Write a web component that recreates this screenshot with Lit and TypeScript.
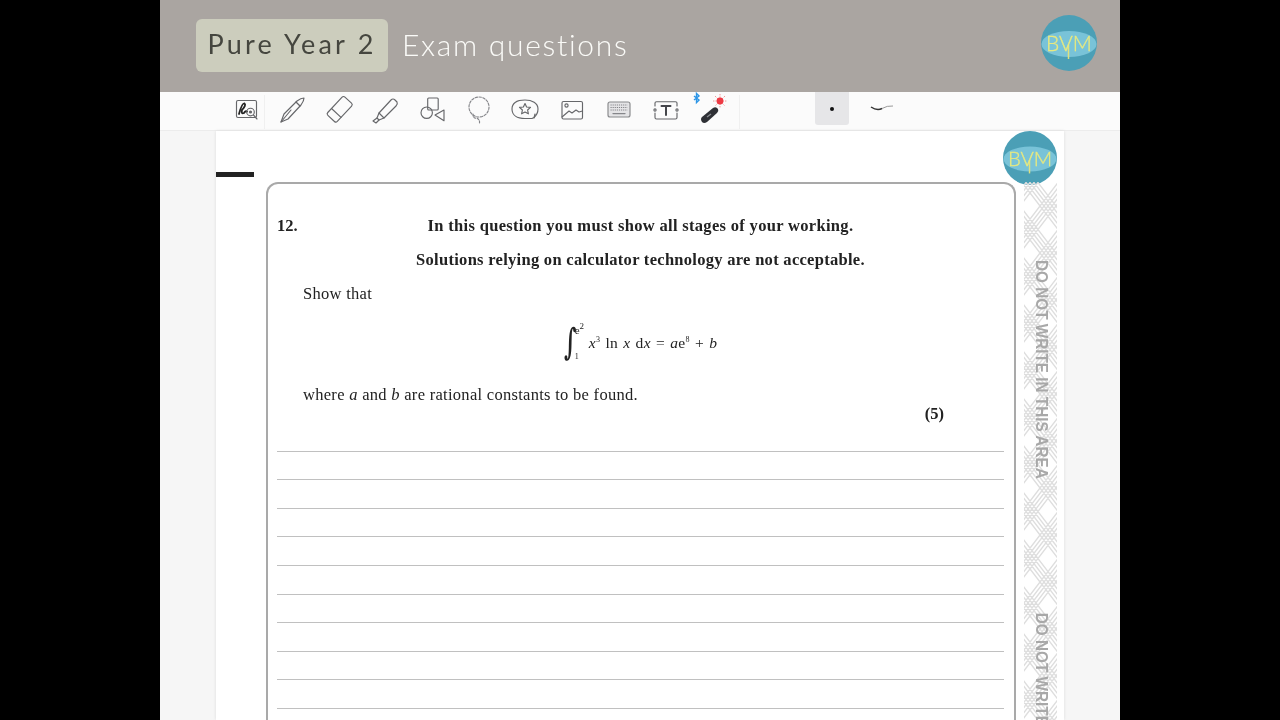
import { LitElement, html, css, svg } from 'lit';
import { customElement } from 'lit/decorators.js';

const logo = (size: number) => html`
    <svg class="logo" width=${size} height=${size} viewBox="0 0 56 56">
        <circle cx="28" cy="28" r="28" fill="#4b9fb6"></circle>
        <ellipse cx="28" cy="29" rx="27.5" ry="13" fill="#79c3d8"></ellipse>
        <path d="M27.5 30 V44" stroke="#dfe17f" stroke-width="1.5"></path>
        <text x="28" y="36" text-anchor="middle" font-family="Lato, sans-serif" font-weight="300" font-size="21" fill="#e8e97f" stroke="#e8e97f" stroke-width="0.3">BVM</text>
    </svg>
`;

const tool = (body: unknown) => html`
    <svg class="icon" width="30" height="30" viewBox="0 0 30 30" fill="none" stroke="#66676a" stroke-width="1.15" stroke-linejoin="round" stroke-linecap="round">${body}</svg>
`;

const icons = [
    svg`<path d="M4 27 L7 19 L20 6 Q24 3 27 3 Q27 6 24 10 L11 24 Z"></path><path d="M4 27 L14 15"></path><path d="M19 7 L23 11"></path>`,
    svg`<g transform="rotate(43 15 15)"><rect x="8.5" y="1.5" width="13" height="25" rx="2"></rect><path d="M8.5 19 H21.5"></path></g>`,
    svg`<path d="M9 18 L21 5 Q23 3 25 5 L27 7 Q28 9 26 11 L14 23 Z"></path><path d="M9 18 L7 23 L9 25 L14 23"></path><path d="M7 23 L3 26 L6 28 L9 25"></path>`,
    svg`<rect x="10.7" y="3" width="10.5" height="12" rx="1"></rect><circle cx="9.7" cy="17.7" r="5.7"></circle><path d="M27 15 V25.7 L18 20 Z"></path>`,
    svg`<circle cx="15" cy="12" r="10" stroke-dasharray="2.4 1.5" stroke="#85868a"></circle><path d="M9 19 Q9 24 13 23 Q16 25 15.5 28" stroke-dasharray="2 1.5" stroke="#85868a"></path>`,
    svg`<path d="M24 22.5 Q28 19 28 14 C28 8 22 5 15 5 C7 5 2 8 2 14 C2 20 7 23.5 15 23.5 L22 23.5 Z"></path><path d="M15 8.5 L16.6 12 L20.5 12.4 L17.6 15 L18.4 18.8 L15 17 L11.6 18.8 L12.4 15 L9.5 12.4 L13.4 12 Z"></path><path d="M25 19 L24 23"></path>`,
    svg`<rect x="5" y="6.5" width="20.5" height="17.5" rx="1.5"></rect><circle cx="9.5" cy="10.5" r="1.6"></circle><path d="M5 22 L12 16 L15 18 L19 15 L22 17 L25.5 16"></path>`,
    svg`<rect x="4" y="7" width="22" height="15" rx="2" fill="#e4e4e6" stroke="#88898c"></rect><path d="M6.5 10 H23.5 M6.5 12.5 H23.5 M6.5 15 H23.5" stroke-dasharray="1.2 0.9" stroke-linecap="butt" stroke="#85868a" stroke-width="1.2"></path><path d="M9 18.6 H21" stroke="#85868a" stroke-width="1.3"></path>`,
    svg`<path d="M4 11 V8 Q4 6.7 5.5 6.7 H24.5 Q26 6.7 26 8 V11 M4 18 V22.5 Q4 24 5.5 24 H24.5 Q26 24 26 22.5 V18"></path><circle cx="4" cy="15" r="1.1"></circle><circle cx="26" cy="15" r="1.1"></circle><path d="M10.5 11 H19.5 M15 11 V20" stroke-width="2" stroke="#44454a"></path>`,
];

const spen = html`
    <svg class="icon" width="36" height="34" viewBox="0 0 36 34" fill="none" overflow="visible">
        <path d="M7 26 L18 17 Q21 15 23 18 Q24 20 22 22 L12 31 Q9 33 7 31 Q5 28 7 26 Z" fill="#2e3035"></path>
        <path d="M12 26 L16 23" stroke="#8b8d92" stroke-width="1.2"></path>
        <path d="M25 3 V17 M18 10 H32 M20 5 L30 15 M30 5 L20 15" stroke="#f29a9a" stroke-width="1" stroke-dasharray="1.4 1"></path>
        <circle cx="25" cy="10" r="3.4" fill="#ee3a44"></circle>
        <path d="M-1 5 L4 9 L1.5 11.5 V2.5 L4 5 L-1 9" stroke="#2b95e6" stroke-width="1.4"></path>
    </svg>
`;

// plaid of crossing line bundles, repeated on a 36x47 tile
const hatchPath = (() => {
    let d = '';
    for (const k of [-8, -4, 0, 4, 8]) {
        for (const n of [-36, 0, 36]) {
            d += `M${k + n} 0 L${k + n + 36} 47 `;
            d += `M${k + n} 47 L${k + n + 36} 0 `;
        }
    }
    return d;
})();

@customElement('app-root')
export class AppRoot extends LitElement {
    static styles = css`
        :host {
            display: block;
            height: 720px;
            overflow: hidden;
            background: #000;
        }
        .stage {
            width: 960px;
            height: 720px;
            margin: 0 auto;
            display: flex;
            flex-direction: column;
            overflow: hidden;
            background: #f6f6f6;
            filter: blur(0.35px);
        }
        .banner {
            height: 92px;
            flex: none;
            box-sizing: border-box;
            background: #aaa5a1;
            display: flex;
            align-items: center;
            padding: 0 23px 0 36px;
        }
        .banner .logo {
            margin-top: -6px;
        }
        .chip {
            width: 192px;
            height: 53px;
            box-sizing: border-box;
            margin-top: -1px;
            padding-bottom: 4px;
            border-radius: 6px;
            background: #cccdbd;
            color: #45463f;
            font: 27px "Lato", sans-serif;
            letter-spacing: 3.2px;
            display: flex;
            align-items: center;
            justify-content: center;
            white-space: nowrap;
        }
        .heading {
            margin: -4px 0 0 14px;
            color: #fbfbf8;
            font: 300 30px "Lato", sans-serif;
            letter-spacing: 1.7px;
            flex: 1;
        }
        .toolbar {
            height: 39px;
            flex: none;
            box-sizing: border-box;
            background: #fbfbfb;
            border-bottom: 1px solid #ececec;
            display: flex;
            align-items: flex-start;
            padding: 3px 0 0 72px;
        }
        .group-a {
            width: 33px;
            height: 34px;
            border-right: 1px solid #f0f0f0;
            margin-right: 12px;
            box-sizing: border-box;
        }
        .tools {
            display: flex;
            gap: 16.7px;
            align-items: flex-start;
            width: 462px;
            height: 34px;
            border-right: 1px solid #f0f0f0;
            flex: none;
        }
        .icon {
            display: block;
            flex: none;
        }
        .spen {
            margin: -4px 0 0 -2px;
        }
        .size {
            width: 34px;
            height: 33px;
            margin: -3px 0 0 75px;
            background: #e6e6e8;
            border-radius: 0 0 3px 3px;
            display: flex;
            align-items: center;
            justify-content: center;
        }
        .size i {
            width: 4px;
            height: 4px;
            border-radius: 50%;
            background: #111;
        }
        .stroke {
            margin: 6px 0 0 21px;
        }
        .page-wrap {
            flex: 1;
            min-height: 0;
            display: flex;
            padding: 0 56px;
        }
        .page {
            position: relative;
            width: 848px;
            box-sizing: border-box;
            background: #fff;
            padding-top: 41px;
            box-shadow: 0 0 3px #dcdcdc;
        }
        .page .logo {
            position: absolute;
            top: 0;
            right: 7px;
        }
        .dash {
            width: 38px;
            height: 5px;
            background: #222;
        }
        .sheet {
            display: flex;
            margin-top: 5px;
        }
        .box {
            width: 750px;
            height: 700px;
            margin-left: 50px;
            box-sizing: border-box;
            flex: none;
            border: 2.5px solid #a9a9a9;
            border-bottom: 0;
            border-radius: 12px 12px 0 0;
            padding: 32px 10px 0 9px;
            font: 16.5px "Liberation Serif", serif;
            color: #222;
        }
        .q-head {
            display: flex;
            font-weight: bold;
            line-height: 20px;
        }
        .q-head span:first-child {
            width: 0;
            white-space: nowrap;
        }
        .q-head span:last-child {
            flex: 1;
            text-align: center;
            letter-spacing: 0.32px;
        }
        .q-sub {
            margin-top: 14px;
            font-weight: bold;
            line-height: 20px;
            text-align: center;
            letter-spacing: 0.29px;
        }
        .body {
            margin: 14px 0 0 26px;
            line-height: 20px;
            letter-spacing: 0.29px;
        }
        .formula {
            display: flex;
            justify-content: center;
            align-items: center;
            height: 48px;
            margin-top: 15px;
            font-size: 15.5px;
            word-spacing: 1px;
            letter-spacing: 0.3px;
        }
        .int {
            font: bold 36px/40px "DejaVu Serif", serif;
            width: 11px;
            transform: translate(0, -2px) scaleX(0.6);
            transform-origin: left;
        }
        .limits {
            display: flex;
            flex-direction: column;
            justify-content: space-between;
            height: 37px;
            font-size: 11px;
            line-height: 10px;
            width: 14px;
            letter-spacing: 0;
        }
        .limits span:last-child {
            font-size: 8px;
        }
        .limits sup {
            font-size: 9px;
        }
        .formula sup {
            line-height: 0;
        }
        .eq sup {
            font-size: 8px;
        }
        .where {
            margin-top: 18px;
        }
        .marks {
            margin-top: -1px;
            text-align: right;
            font-weight: bold;
            line-height: 20px;
            padding-right: 60px;
        }
        .rules {
            margin-top: -1px;
        }
        .rules div {
            height: 28.6px;
            box-sizing: border-box;
            border-bottom: 1px solid #c0c0c0;
        }
        .strip {
            position: relative;
            width: 40px;
            margin-left: 5px;
            height: 600px;
            overflow: hidden;
        }
        .strip svg {
            position: absolute;
            inset: 0;
        }
        .strip-text {
            position: relative;
            writing-mode: vertical-rl;
            font: bold 17px "Liberation Sans", sans-serif;
            color: #a8a8a8;
            white-space: nowrap;
            margin: 78px 0 0 9.5px;
            display: flex;
            gap: 149px;
            transform: scaleY(0.9);
            transform-origin: top;
        }
    `;

    render() {
        return html`
            <div class="stage">
                <div class="banner">
                    <div class="chip">Pure Year 2</div>
                    <div class="heading">Exam questions</div>
                    ${logo(56)}
                </div>
                <div class="toolbar">
                    <div class="group-a">
                        ${tool(svg`<rect x="4.5" y="5.5" width="20" height="17" rx="1.5"></rect><path d="M7 19 Q10 8 12.5 8.5 Q14.5 10 10 15 Q9 19.5 12 18 Q13.5 15.5 15 16.5" stroke="#222" stroke-width="1.8"></path><circle cx="18.5" cy="17" r="3.8"></circle><circle cx="18.5" cy="17" r="1" fill="#55565a"></circle><path d="M21.5 20 L25 24"></path>`)}
                    </div>
                    <div class="tools">
                        ${icons.map(i => tool(i))}
                        <div class="spen">${spen}</div>
                    </div>
                    <div class="size"><i></i></div>
                    <svg class="stroke" width="24" height="14" viewBox="0 0 24 14" fill="none">
                        <path d="M1 6 Q7 10 12 7.5" stroke="#333" stroke-width="1.5"></path>
                        <path d="M12 7.5 Q17 4.5 23 5" stroke="#999" stroke-width="1"></path>
                    </svg>
                </div>
                <div class="page-wrap">
                    <div class="page">
                        ${logo(54)}
                        <div class="dash"></div>
                        <div class="sheet">
                            <div class="box">
                                <div class="q-head">
                                    <span>12.</span>
                                    <span>In this question you must show all stages of your working.</span>
                                </div>
                                <div class="q-sub">Solutions relying on calculator technology are not acceptable.</div>
                                <div class="body">Show that</div>
                                <div class="formula">
                                    <span class="int">∫</span>
                                    <span class="limits"><span>e<sup>2</sup></span><span>1</span></span>
                                    <span class="eq"><i>x</i><sup>3</sup> ln <i>x</i> d<i>x</i> = <i>a</i>e<sup>8</sup> + <i>b</i></span>
                                </div>
                                <div class="body where">where <i>a</i> and <i>b</i> are rational constants to be found.</div>
                                <div class="marks">(5)</div>
                                <div class="rules">
                                    ${Array.from({ length: 10 }, () => html`<div></div>`)}
                                </div>
                            </div>
                            <div class="strip">
                                <svg width="40" height="600">
                                    <defs>
                                        <pattern id="hatch" width="36" height="47" patternUnits="userSpaceOnUse" patternTransform="translate(27 24)">
                                            <path d=${hatchPath} stroke="#dedede" stroke-width="1.4" fill="none"></path>
                                        </pattern>
                                    </defs>
                                    <rect x="3" y="0" width="33" height="600" fill="url(#hatch)"></rect>
                                </svg>
                                <div class="strip-text">
                                    <span>DO NOT WRITE IN THIS AREA</span>
                                    <span>DO NOT WRITE IN THIS AREA</span>
                                </div>
                            </div>
                        </div>
                    </div>
                </div>
            </div>
        `;
    }
}
